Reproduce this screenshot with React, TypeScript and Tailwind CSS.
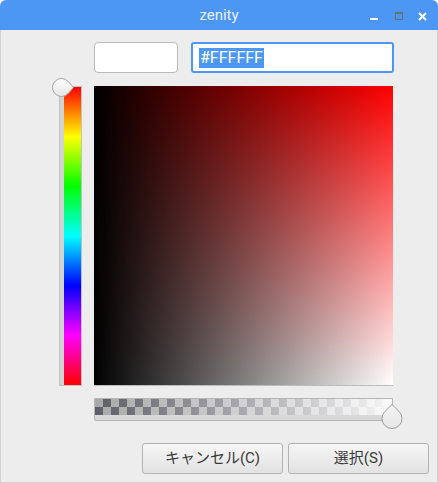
import React from "react";

const font = { fontFamily: 'Roboto, "Noto Sans CJK JP", sans-serif' };

function HueKnob() {
  return (
    <svg className="absolute left-[-9px] top-[-10px]" width="25" height="21" viewBox="0 0 25 21">
      <defs>
        <linearGradient id="kg1" x1="0" y1="0" x2="0" y2="1">
          <stop offset="0" stopColor="#ffffff" />
          <stop offset="1" stopColor="#e4e4e4" />
        </linearGradient>
      </defs>
      <path d="M 22.5 10.5 L 17.25 16.45 A 9 9 0 1 1 17.25 4.55 Z" fill="url(#kg1)" stroke="#a3a3a3" strokeWidth="1" />
    </svg>
  );
}

function AlphaKnob() {
  return (
    <svg className="absolute right-[-12px] top-[4px]" width="24" height="27" viewBox="0 0 24 27">
      <defs>
        <linearGradient id="kg2" x1="0" y1="0" x2="0" y2="1">
          <stop offset="0" stopColor="#f4f4f4" />
          <stop offset="1" stopColor="#e6e6e6" />
        </linearGradient>
      </defs>
      <path d="M 12 1.5 L 19 8.36 A 10 10 0 1 1 5 8.36 Z" fill="url(#kg2)" stroke="#9e9e9e" strokeWidth="1" />
    </svg>
  );
}

export default function App() {
  return (
    <div className="w-[438px] h-[483px] flex flex-col bg-white" style={font}>
      <div className="h-[30px] shrink-0 rounded-t-[6px] bg-[#4d97f4] relative flex items-center justify-center">
        <span className="text-[15px] text-[#e8f0fd] leading-none mt-[1px]">zenity</span>
        <div className="absolute left-[370px] top-[18px] w-[8px] h-[2px] bg-white" />
        <div className="absolute left-[395px] top-[12px] w-[8px] h-[8px] border border-[#6f6f6f] border-t-2" />
        <svg className="absolute left-[418px] top-[12px]" width="9" height="9" viewBox="0 0 9 9">
          <path d="M1 1 L8 8 M8 1 L1 8" stroke="#ffffff" strokeWidth="2" />
        </svg>
      </div>
      <div className="flex-1 bg-[#ededed] border-x border-b border-[#d2d2d2] pl-[58px] pt-[12px] flex flex-col">
        <div className="flex ml-[35px] gap-[13px]">
          <div className="w-[84px] h-[31px] bg-white border border-[#b9b9b9] rounded-[4px]" />
          <div className="w-[203px] h-[31px] bg-white border-2 border-[#4d97f4] rounded-[3px] flex items-center pl-[6px]">
            <span className="bg-[#4d97f4] text-white text-[16px] leading-[20px] px-[1px]">#FFFFFF</span>
          </div>
        </div>
        <div className="flex mt-[13px] gap-[12px]">
          <div className="relative w-[23px] h-[300px] bg-[#d3d3d3] border border-[#c2c2c2] pl-[4px]">
            <div className="w-full h-full bg-[linear-gradient(to_bottom,#ff0000,#ffff00,#00ff00,#00ffff,#0000ff,#ff00ff,#ff0000)]" />
            <HueKnob />
          </div>
          <div className="w-[299px] h-[300px] border-b border-[#bdbdbd] bg-[linear-gradient(to_bottom,#ff0000,#ffffff)]">
            <div className="w-full h-full bg-[linear-gradient(to_right,#000000,rgba(0,0,0,0))]" />
          </div>
        </div>
        <div className="ml-[35px] mt-[12px]">
          <div className="relative w-[299px] h-[23px] bg-[#d8d8d8] border border-[#b5b5b5] rounded-b-[2px]">
            <div className="h-[16px] bg-[repeating-conic-gradient(#5e5e66_0_25%,#a9a9a9_0_50%)] bg-[length:16px_16px]">
              <div className="w-full h-full bg-[linear-gradient(to_right,rgba(255,255,255,0),rgba(255,255,255,0.95))]" />
            </div>
            <AlphaKnob />
          </div>
        </div>
        <div className="flex justify-end gap-[5px] pr-[8px] mt-[22px]">
          <button className="w-[141px] h-[31px] rounded-[3px] border border-[#b3b3b3] bg-[linear-gradient(to_bottom,#f6f6f6,#e2e2e2)] text-[15px] text-[#3a3a3a] flex items-center justify-center">
            キャンセル(C)
          </button>
          <button className="w-[141px] h-[31px] rounded-[3px] border border-[#b3b3b3] bg-[linear-gradient(to_bottom,#f6f6f6,#e2e2e2)] text-[15px] text-[#3a3a3a] flex items-center justify-center">
            選択(S)
          </button>
        </div>
      </div>
    </div>
  );
}
